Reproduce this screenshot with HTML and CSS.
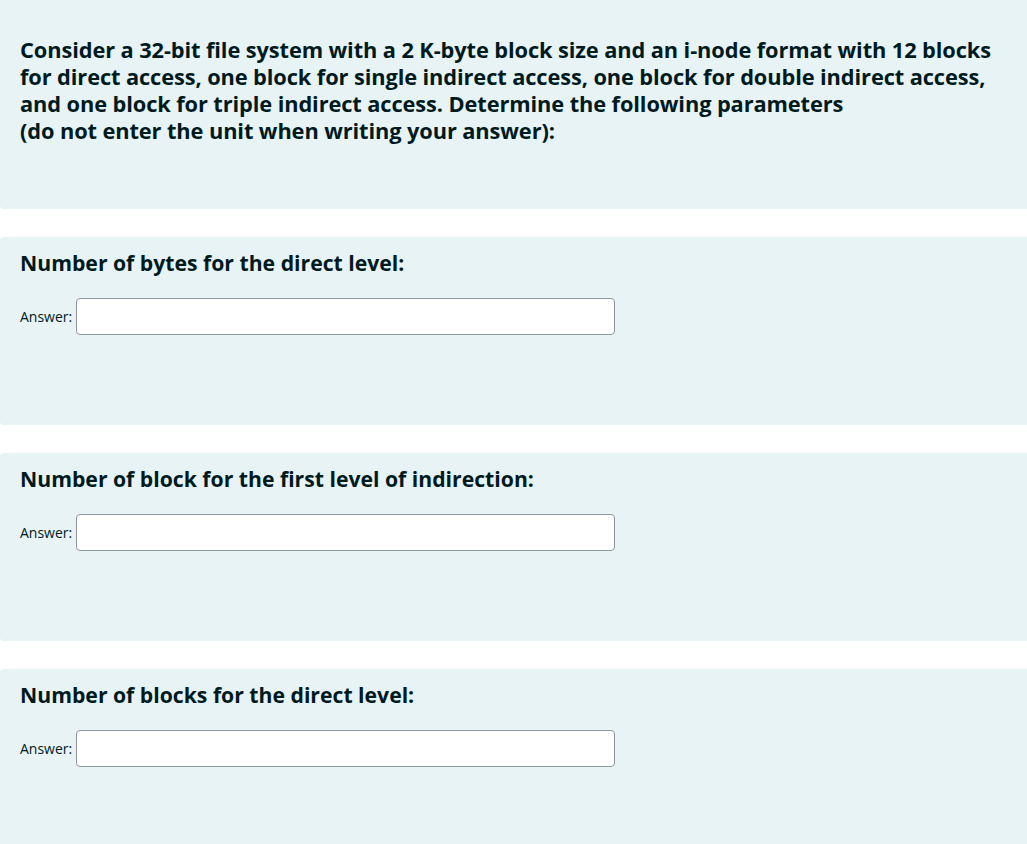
FILE: index.html
```html
<!DOCTYPE html>
<html>
<head>
<meta charset="utf-8">
<link rel="stylesheet" href="styles.css">
</head>
<body>
<div class="page">
  <section class="que intro">
    <p class="qtext">Consider a 32-bit file system with a 2 K-byte block size and an i-node format with 12 blocks for direct access, one block for single indirect access, one block for double indirect access, and one block for triple indirect access. Determine the following parameters<br>(do not enter the unit when writing your answer):</p>
  </section>
  <section class="que">
    <h3 class="qhead">Number of bytes for the direct level:</h3>
    <div class="answer"><label>Answer:</label><input type="text" class="field"></div>
  </section>
  <section class="que">
    <h3 class="qhead">Number of block for the first level of indirection:</h3>
    <div class="answer"><label>Answer:</label><input type="text" class="field"></div>
  </section>
  <section class="que last">
    <h3 class="qhead">Number of blocks for the direct level:</h3>
    <div class="answer"><label>Answer:</label><input type="text" class="field"></div>
  </section>
</div>
</body>
</html>
```
FILE: styles.css
```css
html, body {
  margin: 0;
  padding: 0;
  background: #ffffff;
  overflow: hidden;
}
body {
  font-family: "Open Sans", "Noto Sans", sans-serif;
  color: #001a1e;
}
.page {
  display: flex;
  flex-direction: column;
  gap: 28px;
}
.que {
  background: #e7f3f5;
  border-radius: 4px 0 0 4px;
  padding: 12px 20px 0 20px;
  height: 176px;
}
.que.intro {
  height: 209px;
  padding: 0 20px;
  box-sizing: border-box;
  border-radius: 0 0 0 4px;
}
.que.last {
  height: 200px;
}
.qtext {
  margin: 0;
  padding-top: 36px;
  font-size: 21.8px;
  font-weight: 700;
  line-height: 27px;
  letter-spacing: -0.1px;
}
.qhead {
  margin: 0;
  font-size: 21.2px;
  font-weight: 700;
  line-height: 28px;
}
.answer {
  display: flex;
  align-items: center;
  gap: 4px;
  margin-top: 21px;
}
.answer label {
  font-size: 14px;
  font-weight: 400;
}
.field {
  width: 539px;
  height: 37px;
  box-sizing: border-box;
  border: 1px solid #8f959e;
  border-radius: 4px;
  background: #ffffff;
  margin: 0;
  padding: 0 10px;
}
```
